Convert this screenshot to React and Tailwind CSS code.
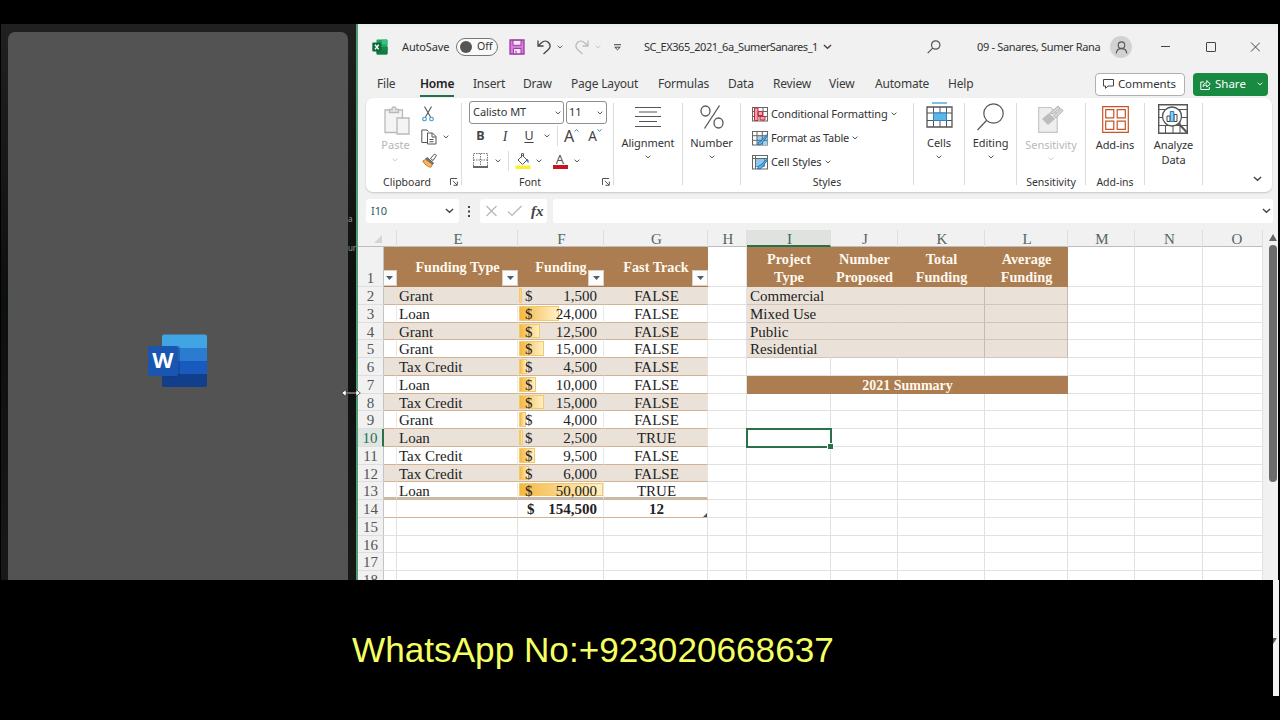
import clsx from 'clsx'

const tabs = [
  { label: 'File', width: 'w-[43px]' },
  { label: 'Home', width: 'w-[53px]', active: true },
  { label: 'Insert', width: 'w-[50px]' },
  { label: 'Draw', width: 'w-[48px]' },
  { label: 'Page Layout', width: 'w-[87px]' },
  { label: 'Formulas', width: 'w-[70px]' },
  { label: 'Data', width: 'w-[45px]' },
  { label: 'Review', width: 'w-[56px]' },
  { label: 'View', width: 'w-[46px]' },
  { label: 'Automate', width: 'w-[73px]' },
  { label: 'Help', width: 'w-[40px]' },
]

const columns = [
  { id: '', width: 'w-[13px]' },
  { id: 'E', width: 'w-[121px]' },
  { id: 'F', width: 'w-[86px]' },
  { id: 'G', width: 'w-[104px]' },
  { id: 'H', width: 'w-[39px]' },
  { id: 'I', width: 'w-[84px]' },
  { id: 'J', width: 'w-[67px]' },
  { id: 'K', width: 'w-[87px]' },
  { id: 'L', width: 'w-[83px]' },
  { id: 'M', width: 'w-[67px]' },
  { id: 'N', width: 'w-[68px]' },
  { id: 'O', width: 'w-[60px]' },
]

const funding = [
  { row: 2, type: 'Grant', amount: 1500, fast: 'FALSE' },
  { row: 3, type: 'Loan', amount: 24000, fast: 'FALSE' },
  { row: 4, type: 'Grant', amount: 12500, fast: 'FALSE' },
  { row: 5, type: 'Grant', amount: 15000, fast: 'FALSE' },
  { row: 6, type: 'Tax Credit', amount: 4500, fast: 'FALSE' },
  { row: 7, type: 'Loan', amount: 10000, fast: 'FALSE' },
  { row: 8, type: 'Tax Credit', amount: 15000, fast: 'FALSE' },
  { row: 9, type: 'Grant', amount: 4000, fast: 'FALSE' },
  { row: 10, type: 'Loan', amount: 2500, fast: 'TRUE' },
  { row: 11, type: 'Tax Credit', amount: 9500, fast: 'FALSE' },
  { row: 12, type: 'Tax Credit', amount: 6000, fast: 'FALSE' },
  { row: 13, type: 'Loan', amount: 50000, fast: 'TRUE' },
]

const projectTypes = { 2: 'Commercial', 3: 'Mixed Use', 4: 'Public', 5: 'Residential' }

function Chevron({ className = 'w-[6px] text-[#444]' }) {
  return (
    <svg viewBox="0 0 6 4" className={clsx('shrink-0', className)} fill="none" stroke="currentColor" strokeWidth="0.9">
      <path d="M0.6 0.7 3 2.900 5.4 0.7" />
    </svg>
  )
}

function ExcelLogo() {
  return (
    <svg viewBox="0 0 16 16" className="w-4 h-4">
      <rect x="4.5" y="0.5" width="11" height="15" rx="1" fill="#21a366" />
      <path d="M10 .5h4.500a1 1 0 0 1 1 1V5.500H10z" fill="#33c481" />
      <path d="M4.500 8H15.500v6.500a1 1 0 0 1-1 1h-9a1 1 0 0 1-1-1z" fill="#107c41" />
      <path d="M10 8h5.500v3.800H10z" fill="#17864a" />
      <rect x="0.300" y="3.500" width="9" height="9" rx="1" fill="#0c6b37" />
      <path d="m3 5.700 3.700 4.700M6.700 5.700 3 10.400" stroke="#fff" strokeWidth="1.400" />
    </svg>
  )
}

function WordLogo() {
  return (
    <svg viewBox="0 0 60 54" className="w-[60px] h-[54px]">
      <path d="M16 .5H57a2 2 0 0 1 2 2V14H14V2.500a2 2 0 0 1 2-2z" fill="#41a5e4" />
      <path d="M14 14H59V27H14z" fill="#2b7cd0" />
      <path d="M14 27H59V40H14z" fill="#185abd" />
      <path d="M14 40H59V51a2 2 0 0 1-2 2H16a2 2 0 0 1-2-2z" fill="#113f8c" />
      <path d="M14 12h16a2 2 0 0 1 2 2v28a2 2 0 0 1-2 2H14z" fill="#0b3a80" opacity=".35" />
      <rect x="0" y="12" width="30" height="30" rx="2" fill="#1a55b0" />
      <text x="15" y="34" textAnchor="middle" fontSize="22" fontWeight="700" fill="#fff" fontFamily="Open Sans, sans-serif">W</text>
    </svg>
  )
}

function TitleBar() {
  return (
    <div className="flex items-center h-[46px] pl-[14px] text-[11px] text-[#333]">
      <ExcelLogo />
      <span className="ml-[14px] w-[54px] tracking-[-0.15px] whitespace-nowrap">AutoSave</span>
      <div className="flex items-center w-[42px] h-[18px] rounded-full border border-[#777] bg-[#fafafa] pl-[3px]">
        <div className="w-[12px] h-[12px] rounded-full bg-[#555]" />
        <span className="ml-[5px] text-[10.500px]">Off</span>
      </div>
      <svg viewBox="0 0 16 16" className="ml-[11px] w-4 h-4" fill="none">
        <path d="M1 1h14v14H1z" fill="#d67fd9" stroke="#9c3ba5" strokeWidth="1.300" />
        <path d="M4 1.300h8v5H4z" fill="#f5e9f6" stroke="#9c3ba5" />
        <path d="M4.500 9.500h7.500v5.300H4.500z" fill="#f5e9f6" stroke="#9c3ba5" />
        <path d="M7 11.500v3" stroke="#9c3ba5" />
      </svg>
      <svg viewBox="0 0 14 15" className="ml-[12px] w-[14px] h-[15px]" fill="none" stroke="#444" strokeWidth="1.300">
        <path d="M1 .5v5.500h5.500" />
        <path d="M1.200 5.800 4.500 2.700C7 .5 10 .8 11.700 2.700c1.900 2.200 1.600 4.900-.3 6.800L6.500 14" />
      </svg>
      <Chevron className="ml-[6px] w-[6px] text-[#555]" />
      <svg viewBox="0 0 14 15" className="ml-[12px] w-[14px] h-[15px]" fill="none" stroke="#bcbcbc" strokeWidth="1.300">
        <path d="M13 .5v5.500H7.500" />
        <path d="M12.800 5.800 9.500 2.700C7 .5 4 .8 2.300 2.700.4 4.900.7 7.600 2.600 9.500L7.500 14" />
      </svg>
      <Chevron className="ml-[6px] w-[6px] text-[#c4c4c4]" />
      <svg viewBox="0 0 7 7" className="ml-[13px] w-[7px] h-[7px]" fill="none" stroke="#444">
        <path d="M0 .7h7M.8 3.200 3.500 5.800 6.200 3.200z" />
      </svg>
      <span className="ml-[23px] w-[175px] whitespace-nowrap tracking-[-0.440px]">SC_EX365_2021_6a_SumerSanares_1</span>
      <Chevron className="ml-[4px] w-[9px] text-[#444]" />
      <svg viewBox="0 0 14 14" className="ml-[95px] w-[14px] h-[14px]" fill="none" stroke="#555" strokeWidth="1.200">
        <circle cx="8.700" cy="5" r="4.200" />
        <path d="M5.700 8.200.7 13.200" />
      </svg>
      <span className="ml-[36px] w-[126px] whitespace-nowrap tracking-[-0.330px]">09 - Sanares, Sumer Rana</span>
      <div className="ml-[7px] flex items-center justify-center w-[22px] h-[22px] rounded-full bg-[#d2d2d2]">
        <svg viewBox="0 0 14 14" className="w-[13px] h-[13px]" fill="none" stroke="#555" strokeWidth="1.200">
          <circle cx="7" cy="4.500" r="3.500" />
          <path d="M1.300 13.500C1.600 10 4 8.200 7 8.200s5.400 1.800 5.700 5.300" />
        </svg>
      </div>
      <svg viewBox="0 0 100 12" className="ml-[28px] w-[100px] h-[12px]" fill="none" stroke="#444">
        <path d="M1 5.500h9" />
        <rect x="46.500" y="1.500" width="9" height="9" rx="0.500" />
        <path d="m91 1.500 9 9M100 1.500l-9 9" />
      </svg>
    </div>
  )
}

function TabRow() {
  return (
    <div className="flex items-center h-[28px] pl-[19px] text-[12px] text-[#3b3b3b]">
      {tabs.map((tab) => (
        <div key={tab.label} className={clsx('shrink-0 h-[24px] flex', tab.width)}>
          <span
            className={clsx(
              'leading-[24px] h-[25px] whitespace-nowrap tracking-[-0.2px]',
              tab.active && 'font-semibold text-[#222] border-b-2 border-[#1f7246] tracking-[-0.200px]'
            )}
          >
            {tab.label}
          </span>
        </div>
      ))}
      <div className="ml-[107px] flex items-center w-[90px] h-[23px] rounded-[4px] border border-[#b0b0b0] bg-white pl-[7px] text-[11.500px] text-[#333]">
        <svg viewBox="0 0 11 10" className="w-[11px] h-[10px] shrink-0" fill="none" stroke="#444">
          <path d="M.5 .5h10v6.500H5L2.500 9.300V7h-2z" />
        </svg>
        <span className="ml-[4px] tracking-[-0.15px]">Comments</span>
      </div>
      <div className="ml-[8px] flex items-center w-[75px] h-[23px] rounded-[4px] bg-[#188a42] pl-[7px] text-[11.500px] text-white">
        <svg viewBox="0 0 11 11" className="w-[11px] h-[11px] shrink-0" fill="none" stroke="#fff">
          <path d="M4 3H.8v7.500h8.500V8" />
          <path d="M3 7.500C3.200 5 4.500 4 6.800 4V1.500L10.300 5 6.800 8V6C5 6 4 6.500 3 7.500z" />
        </svg>
        <span className="ml-[4px] w-[31px]">Share</span>
        <Chevron className="ml-[11px] w-[6px] text-white" />
      </div>
    </div>
  )
}

function Launcher({ className }) {
  return (
    <svg viewBox="0 0 8 8" className={clsx('w-[8px] h-[8px] shrink-0', className)} fill="none" stroke="#555">
      <path d="M.5 7V.5H7M2.800 2.800 7 7M7.300 3.500v3.800H3.500" />
    </svg>
  )
}

function Group({ width, label, children }) {
  return (
    <div className={clsx('relative flex flex-col items-center shrink-0', width)}>
      <div className="flex flex-col items-center w-full h-[75px]">{children}</div>
      <div className="h-[18px] leading-[18px] text-[10.500px] text-[#333] whitespace-nowrap">{label}</div>
      <div className="absolute right-0 top-[5px] w-px h-[82px] bg-[#dcdcdc]" />
    </div>
  )
}

function ClipboardGroup() {
  return (
    <Group width="w-[96px]" label={<span className="ml-[-14px]">Clipboard</span>}>
      <div className="flex w-full">
        <div className="flex flex-col items-center w-[58px] pt-[8px]">
          <svg viewBox="0 0 26 30" className="w-[26px] h-[30px] ml-[4px]" fill="#f4f4f4" stroke="#b9b9b9" strokeWidth="1.300">
            <path d="M1 4h17.500v22.500H1z" />
            <path d="M5.500 6.500V3.500H8C8 1.500 9 .8 10 .8s2 .7 2 2.700h2.500v3z" fill="#e4e4e4" />
            <path d="M13 12h12v16H13z" />
          </svg>
          <span className="mt-[1px] ml-[1px] leading-[16px] text-[11px] text-[#b5b5b5]">Paste</span>
          <Chevron className="mt-[5px] w-[6px] text-[#c4c4c4]" />
        </div>
        <div className="flex flex-col w-[38px]">
          <svg viewBox="0 0 12 16" className="mt-[8px] ml-[-2px] w-[12px] h-[16px]" fill="none" strokeWidth="1.100">
            <path d="M2.500 .5 8.500 11M9.500 .5 3.500 11" stroke="#555" />
            <circle cx="2.500" cy="13" r="1.800" stroke="#3a96d0" />
            <circle cx="9.500" cy="13" r="1.800" stroke="#3a96d0" />
          </svg>
          <div className="mt-[7px] flex items-center">
            <svg viewBox="0 0 16 16" className="ml-[-3px] w-[16px] h-[16px]" fill="#fff" stroke="#555">
              <path d="M6 13.500H.8V1H6l1.500 1.500" />
              <path d="M6.500 4h5L15 7.500v7.500H6.500zM11 4v4h4M8.500 10.500h4M8.500 12.700h4" />
            </svg>
            <Chevron className="ml-[6px] w-[6px] text-[#444]" />
          </div>
          <svg viewBox="0 0 15 15" className="mt-[8px] ml-[-2px] w-[15px] h-[15px]">
            <path d="M8.500 5.500 12.500 1l2 1.500-3.500 5z" fill="#fff" stroke="#555" />
            <path d="m5 4.500 6.500 5.500-1.200 1.600-6.800-5.400z" fill="#777" stroke="#555" />
            <path d="M3.500 6.500.8 8c1.500 3 4.500 5.700 8 6.300l1.500-2.800z" fill="#f6b765" stroke="#c77b25" />
          </svg>
        </div>
      </div>
      <Launcher className="absolute right-[4px] bottom-[6px]" />
    </Group>
  )
}

function FontGroup() {
  return (
    <Group width="w-[152px]" label={<span className="ml-[-16px]">Font</span>}>
      <div className="flex gap-[2px] w-full pl-[7px] pt-[3px] text-[11px] text-[#333]">
        <div className="flex items-center justify-between w-[95px] h-[23px] border border-[#8f8f8f] rounded-[3px] pl-[3px] pr-[2px]">
          <span className="tracking-[-0.05px]">Calisto MT</span>
          <Chevron />
        </div>
        <div className="flex items-center justify-between w-[41px] h-[23px] border border-[#8f8f8f] rounded-[3px] pl-[2px] pr-[3px]">
          <span>11</span>
          <Chevron />
        </div>
      </div>
      <div className="flex items-center w-full h-[25px] pl-[6px] text-[12.500px] text-[#444]">
        <span className="w-[25px] text-center font-bold">B</span>
        <span className="w-[24px] text-center italic font-['Liberation_Serif',serif] text-[14px]">I</span>
        <span className="w-[24px] text-center underline underline-offset-2">U</span>
        <span className="w-[12px] flex justify-center"><Chevron /></span>
        <span className="w-[8px] flex justify-center"><i className="w-px h-[20px] bg-[#dcdcdc]" /></span>
        <span className="w-[21px] flex justify-center text-[16px] leading-[20px]">
          A
          <svg viewBox="0 0 5 3" className="mt-[3px] w-[5px] h-[3px]" fill="none" stroke="#3e8e8e"><path d="M.5 2.500 2.500.7l2 1.800" /></svg>
        </span>
        <span className="w-[26px] flex justify-center text-[13.500px] leading-[20px]">
          A
          <svg viewBox="0 0 5 3" className="mt-[3px] w-[5px] h-[3px]" fill="none" stroke="#3e8e8e"><path d="M.5.500 2.500 2.300 4.500.5" /></svg>
        </span>
      </div>
      <div className="flex items-center w-full h-[25px] pl-[6px]">
        <span className="w-[24px] flex justify-center">
          <svg viewBox="0 0 15 15" className="w-[15px] h-[15px]" fill="none" stroke="#777">
            <path d="M.5 13V.5h14V13M.5 7h14M7.500 .5V13" strokeDasharray="1.500 1" />
            <path d="M0 14h15" stroke="#333" strokeWidth="1.500" />
          </svg>
        </span>
        <span className="w-[12px] flex justify-center"><Chevron /></span>
        <span className="w-[8px] flex justify-center"><i className="w-px h-[20px] bg-[#dcdcdc]" /></span>
        <span className="w-[21px] flex justify-center">
          <svg viewBox="0 0 16 16" className="w-[16px] h-[16px]" fill="none">
            <path d="m7.500 2.500 4.500 4.500-4.500 4.500L3 7z" stroke="#555" fill="#fff" />
            <path d="M6.500 4.500V.7h2v3" stroke="#555" />
            <path d="M11.500 5.500c2 .5 2.500 2.500 2 4.500-1.500-.5-2-2.500-2-4.500z" fill="#2f7cc0" />
            <path d="M.5 12.500h15V16H.5z" fill="#fbf02e" />
          </svg>
        </span>
        <span className="w-[12px] flex justify-center"><Chevron /></span>
        <span className="ml-[3px] w-[24px] flex flex-col items-center">
          <span className="text-[13px] leading-[12px] text-[#555]">A</span>
          <i className="w-[15px] h-[3.500px] bg-[#c8141e]" />
        </span>
        <span className="w-[10px] flex justify-center"><Chevron /></span>
      </div>
      <Launcher className="absolute right-[4px] bottom-[6px]" />
    </Group>
  )
}

function BigButton({ icon, label, muted, gap = 'h-[37px]', arrow = true }) {
  return (
    <div className={clsx('flex flex-col items-center -ml-px text-[11px]', muted ? 'text-[#b8b8b8]' : 'text-[#333]')}>
      <div className={clsx('flex items-end justify-center', gap)}>{icon}</div>
      <span className="leading-[15px] text-center whitespace-pre tracking-[-0.05px]">{label}</span>
      {arrow && <Chevron className={clsx('mt-[5px] w-[6px]', muted ? 'text-[#ccc]' : 'text-[#444]')} />}
    </div>
  )
}

const AlignIcon = () => (
  <svg viewBox="0 0 26 22" className="w-[26px] h-[22px] mb-[7px]" stroke="#555" strokeWidth="1.200">
    <path d="M0 1.500h26M4 6h18M0 10.500h26M4 15.500h18M0 20.500h26" />
  </svg>
)

const PercentIcon = () => (
  <svg viewBox="0 0 24 24" className="w-[24px] h-[24px] mb-[6px]" fill="none" stroke="#555" strokeWidth="1.300">
    <ellipse cx="5.500" cy="6" rx="4.500" ry="5" />
    <ellipse cx="18.500" cy="18" rx="4.500" ry="5" />
    <path d="M19.500 .5 4.500 23.500" />
  </svg>
)

const CellsIcon = () => (
  <svg viewBox="0 0 27 26" className="w-[27px] h-[26px] mb-[7px]" fill="none" stroke="#555">
    <path d="M6 1h15" stroke="#3f9bd6" strokeWidth="1.300" />
    <path d="M1 5h25v20H1z" strokeWidth="1.300" />
    <path d="M1 11h25M1 18.500h25M7.500 5v20M20.500 5v20M14 5v6M14 18.500v6.500" />
    <path d="M7.500 11h13v7.500h-13z" fill="#5fb4ea" stroke="#2b87c8" />
  </svg>
)

const EditingIcon = () => (
  <svg viewBox="0 0 27 28" className="w-[27px] h-[28px] mb-[4px]" fill="none" stroke="#555" strokeWidth="1.200">
    <circle cx="16.500" cy="10.500" r="9.700" />
    <path d="M9.500 17.500.5 27" />
  </svg>
)

const SensitivityIcon = () => (
  <svg viewBox="0 0 26 28" className="w-[26px] h-[28px] mb-[4px]">
    <path d="M.7 2.500h12l6.500 6v18.800H.7z" fill="#eee" stroke="#c6c6c6" strokeWidth="1.200" />
    <path d="m4 14 7-6 6 6-7 6z" fill="#bdbdbd" />
    <path d="m12 8 8-7 2 2-7 6zM15.500 11l7.500-7.500 2 2-7 7.500z" fill="#d5d5d5" stroke="#b5b5b5" />
  </svg>
)

const AddinsIcon = () => (
  <svg viewBox="0 0 27 27" className="w-[27px] h-[27px] mb-[4px]" fill="none" stroke="#c4552a" strokeWidth="1.200">
    <path d="M.7.700h25.600v25.600H.7z" />
    <path d="M3.700 3.700h8.100v8.100H3.700zM15.200 3.700h8.100v8.100h-8.100zM3.700 15.200h8.100v8.100H3.700zM15.200 15.200h8.100v8.100h-8.100z" />
  </svg>
)

const AnalyzeIcon = () => (
  <svg viewBox="0 0 30 30" className="w-[30px] h-[30px] mb-[3px]" fill="none" stroke="#555">
    <path d="M.7.700h28.600v28.600H.7z" strokeWidth="1.400" />
    <path d="M.7 5.500h28.600M.7 13.500h28.600M.7 21.500h28.600M7.500 21.500v8M15 21.500v8M22 5.500v24" />
    <circle cx="14" cy="12.500" r="9.500" fill="#fff" strokeWidth="1.300" />
    <path d="m20.500 19.500 8.500 9" strokeWidth="2" />
    <path d="M9 12h3v5.500H9zM16 10.500h3v7h-3z" fill="#fff" stroke="#444" />
    <path d="M12.300 7.500h3.500v10h-3.500z" fill="#8ec8ee" stroke="#2b78b8" />
  </svg>
)

function StyleIcon({ kind }) {
  return (
    <svg viewBox="0 0 16 15" className="w-[16px] h-[15px] shrink-0" fill="none" stroke="#666">
      <path d="M.5 .5h15v13.500H.5z" fill="#fff" strokeWidth="1.100" />
      {kind === 'conditional' && (
        <>
          <path d="M.5 4.500h15M.5 9.500h15M11 .5v13.500" />
          <path d="M2.500 1h3.500v12.500H2.500zM6 4.500h4.500v4H6zM8 9.500h5v3.500H8z" fill="#f2a3ab" stroke="#c42b3f" />
        </>
      )}
      {kind === 'table' && (
        <>
          <path d="M5 5h10.500v9H5z" fill="#9fd0f2" stroke="none" />
          <path d="M.5 4.700h15M.5 9.300h15M5 .5v13.500M10.300 .5v13.500" />
        </>
      )}
      {kind === 'cell' && (
        <>
          <path d="M3.500 3.500h9v8h-9z" fill="#8ec8ee" stroke="#3f9bd6" />
          <path d="M.5 3.500h15M3.500 .5v13.500" />
        </>
      )}
      {kind !== 'conditional' && (
        <path d="m15 3.500-6 6.500c-2 0-2.500 1.500-3.500 3.500 2.500.6 4.500 0 5-2L15.800 4.500z" fill="#5fb4ea" stroke="#2b6fa8" />
      )}
    </svg>
  )
}

function StylesGroup() {
  const items = [
    { kind: 'conditional', label: 'Conditional Formatting', width: 'w-[117px]', track: 'tracking-[-0.150px]' },
    { kind: 'table', label: 'Format as Table', width: 'w-[78px]', track: 'tracking-[-0.25px]' },
    { kind: 'cell', label: 'Cell Styles', width: 'w-[51px]', track: 'tracking-[-0.1px]' },
  ]
  return (
    <Group width="w-[173px]" label={<span className="-ml-px">Styles</span>}>
      <div className="w-full pl-[11px] pt-[4px] text-[11px] text-[#333]">
        {items.map((it) => (
          <div key={it.kind} className="flex items-center h-[24px]">
            <StyleIcon kind={it.kind} />
            <span className={clsx('ml-[3px] whitespace-nowrap', it.width, it.track)}>{it.label}</span>
            <Chevron className="ml-[3px] w-[6px] text-[#444]" />
          </div>
        ))}
      </div>
    </Group>
  )
}

function Ribbon() {
  return (
    <div className="relative flex ml-[8px] mr-[6px] h-[94px] rounded-[7px] bg-white shadow-[0_1px_2px_rgba(0,0,0,0.18)]">
      <ClipboardGroup />
      <FontGroup />
      <Group width="w-[69px]"><BigButton icon={<AlignIcon />} label="Alignment" /></Group>
      <Group width="w-[58px]"><BigButton icon={<PercentIcon />} label="Number" /></Group>
      <StylesGroup />
      <Group width="w-[51px]"><BigButton icon={<CellsIcon />} label="Cells" /></Group>
      <Group width="w-[52px]"><BigButton icon={<EditingIcon />} label="Editing" /></Group>
      <Group width="w-[69px]" label={<span className="-ml-px">Sensitivity</span>}>
        <BigButton icon={<SensitivityIcon />} label="Sensitivity" gap="h-[39px]" muted />
      </Group>
      <Group width="w-[59px]" label={<span className="-ml-px">Add-ins</span>}>
        <BigButton icon={<AddinsIcon />} label="Add-ins" gap="h-[39px]" arrow={false} />
      </Group>
      <Group width="w-[58px]">
        <BigButton icon={<AnalyzeIcon />} label={'Analyze\nData'} gap="h-[39px]" arrow={false} />
      </Group>
      <Chevron className="absolute right-[10px] bottom-[10px] w-[9px] text-[#444]" />
    </div>
  )
}

function FormulaBar() {
  return (
    <div className="flex items-center mt-[7px] ml-[8px] mr-[5px] h-[24px]">
      <div className="flex items-center justify-between w-[93px] h-full rounded-[3px] bg-white pl-[5px] pr-[5px] text-[11px] text-[#2c5c60] tracking-[-0.1px]">
        I10
        <Chevron className="w-[9px] text-[#444]" />
      </div>
      <svg viewBox="0 0 2 11" className="ml-[9px] w-[2px] h-[11px]" fill="#444">
        <path d="M0 0h2v2H0zM0 4.500h2v2H0zM0 9h2v2H0z" />
      </svg>
      <div className="ml-[10px] flex items-center w-[67px] h-full rounded-[3px] bg-white pl-[6px]">
        <svg viewBox="0 0 36 12" className="w-[36px] h-[12px]" fill="none" stroke="#b5b5b5" strokeWidth="1.200">
          <path d="m.500 1 10 10M10.500 1l-10 10M22 6.500l4 4L35.500 1" />
        </svg>
        <span className="ml-[9px] font-['Liberation_Serif',serif] italic font-bold text-[15px] leading-[20px] text-[#444]">fx</span>
      </div>
      <div className="ml-[6px] flex flex-1 items-center justify-end h-full rounded-[3px] bg-white pr-[2px]">
        <Chevron className="w-[9px] text-[#444]" />
      </div>
    </div>
  )
}

function FilterButton() {
  return (
    <span className="absolute right-0 bottom-[1px] flex items-center justify-center w-[16px] h-[16px] bg-[#fcfcfc] border border-[#d8cfc6]">
      <svg viewBox="0 0 7 4" className="w-[7px] h-[4px]" fill="#4d5f6c"><path d="M0 0h7L3.500 4z" /></svg>
    </span>
  )
}

function AmountCell({ amount }) {
  const width = amount >= 50000 ? 84 : Math.max(3, (amount / 50000) * 84)
  return (
    <div className="relative w-full h-full">
      <div
        className="absolute left-[1px] top-[1px] bottom-[1px] border border-[#f3c969] bg-linear-to-r from-[#f4b83c] to-[#fff0c4]"
        style={{ width }}
      />
      <div className="relative flex justify-between pl-[7px] pr-[6px]">
        <span>$</span>
        <span>{amount.toLocaleString('en-US')}</span>
      </div>
    </div>
  )
}

function Cell({ col, row }) {
  const inTable = ['', 'E', 'F', 'G'].includes(col.id)
  const inSummary = ['I', 'J', 'K', 'L'].includes(col.id)
  const record = funding.find((r) => r.row === row)
  const band = row % 2 === 0
  let style = 'border-[#e1e1e1]'
  let content = null

  if (inTable && record) {
    style = clsx('border-b-[#d0b294]', band ? 'bg-[#eae2d9] border-r-[#eae2d9]' : 'border-r-[#e8e8e8]')
    if (row === 13) style = 'border-b-[3px] border-b-[#cdb8a3] border-r-[#e8e8e8]'
    if (col.id === 'E') content = <span className="pl-[2px]">{record.type}</span>
    if (col.id === 'F') content = <AmountCell amount={record.amount} />
    if (col.id === 'G') content = <span className="w-full pl-[2px] text-center">{record.fast}</span>
  }

  if (inTable && row === 14) {
    style = 'border-b-[#d0b294] border-r-[#e8e8e8] font-bold text-[15px]'
    if (col.id === 'F') {
      content = (
        <div className="flex justify-between w-full pl-[9px] pr-[6px]">
          <span>$</span>
          <span>154,500</span>
        </div>
      )
    }
    if (col.id === 'G') {
      content = (
        <>
          <span className="w-full pl-[2px] text-center">12</span>
          <svg viewBox="0 0 4 4" className="absolute right-0 bottom-0 w-[4px] h-[4px]" fill="#41506e"><path d="M4 0v4H0z" /></svg>
        </>
      )
    }
  }

  if (inSummary && projectTypes[row]) {
    style = clsx('bg-[#eae2d9] border-b-[#d1c5b9]', ['K', 'L'].includes(col.id) ? 'border-r-[#c9bbad]' : 'border-r-[#eae2d9]')
    if (col.id === 'I') content = <span className="pl-[3px]">{projectTypes[row]}</span>
  }

  if (inSummary && row === 7) {
    // merged across I:L, the caption is centred over the whole band
    if (col.id !== 'I') return null
    return (
      <div className="flex justify-center w-[321px] h-full shrink-0 bg-[#ac7d50] font-bold text-[14px] leading-[19px] text-[#fff8ee]">
        2021 Summary
      </div>
    )
  }

  return (
    <div className={clsx('relative flex items-start shrink-0 h-full border-r border-b leading-[18px] whitespace-nowrap', col.width, style)}>
      {content}
      {col.id === 'I' && row === 10 && (
        <div className="absolute -left-px -top-px w-[86px] h-[20px] border-2 border-[#2a7048] z-10">
          <i className="absolute -right-[3px] -bottom-[3px] w-[5px] h-[5px] bg-[#2a7048] outline outline-white" />
        </div>
      )}
    </div>
  )
}

function HeaderCell({ col }) {
  const titles = { E: 'Funding Type', F: 'Funding', G: 'Fast Track' }
  const summary = { I: 'Project\nType', J: 'Number\nProposed', K: 'Total\nFunding', L: 'Average\nFunding' }
  if (col.id === '' || titles[col.id]) {
    return (
      <div className={clsx('relative flex justify-center shrink-0 h-full overflow-hidden bg-[#ac7d50] text-[#fff8ee] font-bold text-[14.200px] leading-[41px] whitespace-nowrap', col.width)}>
        {titles[col.id]}
        <FilterButton />
      </div>
    )
  }
  if (summary[col.id]) {
    return (
      <div className={clsx('shrink-0 h-full bg-[#ac7d50] text-[#fff8ee] font-bold text-[14.300px] leading-[18px] pt-[3px] text-center whitespace-pre', col.width)}>
        {summary[col.id]}
      </div>
    )
  }
  return <div className={clsx('shrink-0 h-full border-r border-b border-[#e1e1e1]', col.width)} />
}

function RowNumber({ n }) {
  return (
    <div
      className={clsx(
        'flex items-start justify-center w-[26px] h-full shrink-0 border-r border-b border-b-[#dedede] text-[15px]',
        n === 1 ? 'pt-[22px] leading-[18px]' : 'leading-[19px]',
        n === 10 ? 'bg-[#dfe5e1] border-r-2 border-r-[#2a7048] text-[#2f6c57]' : 'bg-[#f0f1f0] border-r-[#c4c4c4] text-[#555]'
      )}
    >
      {n}
    </div>
  )
}

function Sheet() {
  const rows = Array.from({ length: 17 }, (_, i) => i + 2)
  return (
    <div className="flex mt-[7px] h-[350px] overflow-hidden font-['Liberation_Serif',serif] text-[15px] text-[#222]">
      <div className="w-[905px] shrink-0">
        <div className="flex h-[17px] text-[#566] border-b border-[#bdbdbd]">
          <div className="flex items-end justify-end w-[26px] h-full shrink-0 pr-[2px] pb-[3px]">
            <svg viewBox="0 0 8 8" className="w-[8px] h-[8px]" fill="#d5d5d5"><path d="M8 0v8H0z" /></svg>
          </div>
          {columns.map((col) => (
            <div
              key={col.id}
              className={clsx(
                'shrink-0 h-[17px] text-center leading-[18px] border-r border-[#dedede]',
                col.width,
                col.id === 'I' && 'bg-[#dfe2df] border-b-2 border-b-[#2a7048] text-[#2f6c57]',
                col.id === 'O' ? 'pl-[9px]' : 'pl-[2px]'
              )}
            >
              {col.id}
            </div>
          ))}
        </div>
        <div className="flex h-[40px] bg-white">
          <RowNumber n={1} />
          {columns.map((col) => <HeaderCell key={col.id} col={col} />)}
        </div>
        {rows.map((row) => (
          <div key={row} className="flex h-[17.770px] bg-white">
            <RowNumber n={row} />
            {columns.map((col) => <Cell key={col.id} col={col} row={row} />)}
          </div>
        ))}
      </div>
      <div className="flex flex-col items-center flex-1 bg-[#f0f1f0] pl-[5px]">
        <svg viewBox="0 0 8 7" className="mt-[4px] w-[8px] h-[7px]" fill="#666"><path d="M4 0 8 7H0z" /></svg>
        <div className="mt-[4px] w-[8px] h-[237px] rounded-full bg-[#6b6b6b]" />
      </div>
    </div>
  )
}

function ExcelWindow() {
  return (
    <div className="w-[922px] h-[556px] shrink-0 overflow-hidden border-l-2 border-[#4f9c74] bg-[#f0f1f0] shadow-[inset_0_2px_2px_#dff3e8]">
      <TitleBar />
      <TabRow />
      <Ribbon />
      <FormulaBar />
      <Sheet />
    </div>
  )
}

function WordSplash() {
  return (
    <div className="relative flex w-[355px] h-[556px] shrink-0 overflow-hidden bg-linear-to-b from-[#202020] via-[#0d0f0e] to-[#171817] pt-[8px] pl-[7px]">
      <div className="flex items-center w-[340px] h-[658px] shrink-0 rounded-t-[7px] bg-[#535353]">
        <div className="ml-[140px]"><WordLogo /></div>
      </div>
      <div className="flex flex-col pt-[179px] text-[8px] leading-[16px] text-[#9a9a9a]">
        <span>a</span>
        <span className="mt-[13px] tracking-[-0.3px]">ur</span>
      </div>
    </div>
  )
}

export default function App() {
  return (
    <div className="relative w-[1280px] h-[720px] overflow-hidden bg-black font-['Noto_Sans',sans-serif]">
      <div className="flex pt-[24px] pl-px">
        <WordSplash />
        <ExcelWindow />
      </div>
      <div className="flex h-[140px]">
        <div className="w-[1273px] pl-[352px] pt-[50px] font-['Liberation_Sans',sans-serif] text-[35.160px] leading-[40px] text-[#f4ff62] whitespace-nowrap">
          WhatsApp No:+923020668637
        </div>
        <div className="w-[6px] h-[116px] bg-[#f1f1f1]">
          <svg viewBox="0 0 4 6" className="mt-[58px] w-[4px] h-[6px]" fill="#555"><path d="M0 0h4L0 6z" /></svg>
        </div>
      </div>
      {/* resize cursor over the window edge */}
      <svg viewBox="0 0 20 10" className="absolute left-[341px] top-[388px] w-[20px] h-[10px]" fill="#fff" stroke="#222" strokeWidth="0.700">
        <path d="M.7 5 5 1.500V4.300h10V1.500l4.300 3.500L15 8.500V5.700H5v2.800z" />
      </svg>
    </div>
  )
}
